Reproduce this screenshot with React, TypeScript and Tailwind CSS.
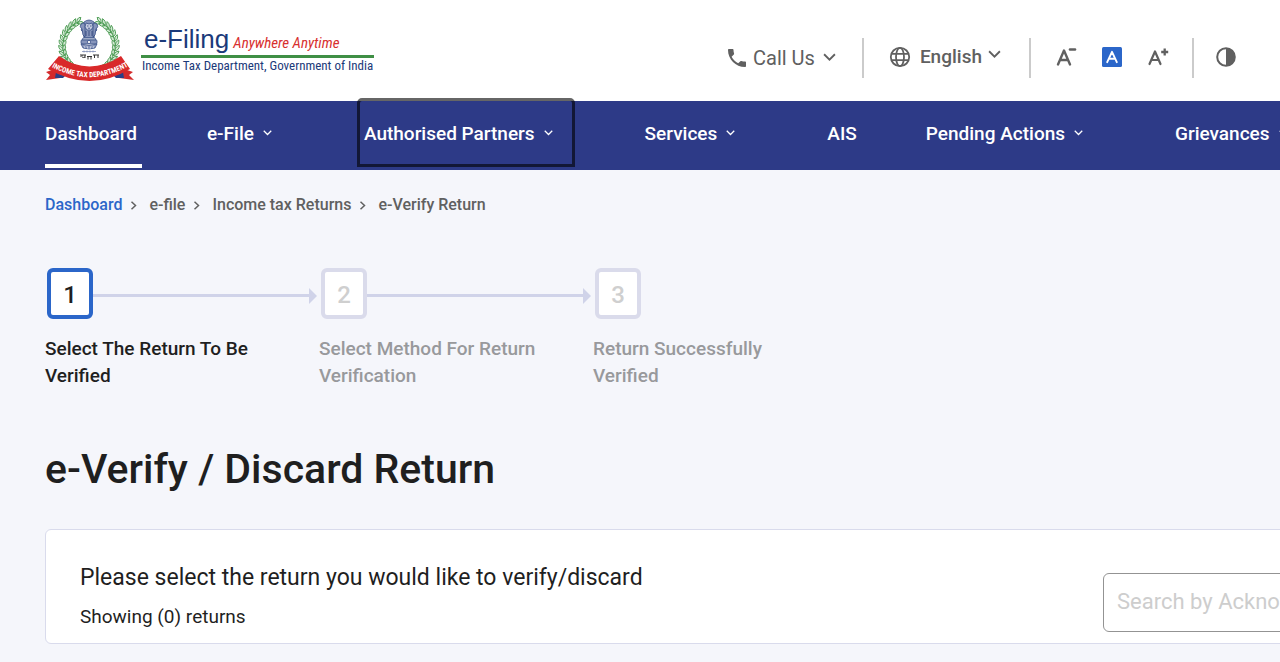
import React from 'react';

const CHEVRON = 'M1 1l5 5 5-5';

const Chevron: React.FC<{ className?: string }> = ({ className }) => (
  <svg className={className} viewBox="0 0 12 8" fill="none" stroke="currentColor" strokeWidth="1.700" aria-hidden="true">
    <path d={CHEVRON} />
  </svg>
);

// Leaves run from the ribbon up to the open top of the wreath
const leafAngles = Array.from({ length: 15 }, (_, i) => 8 + i * 10.5);

const Emblem: React.FC = () => (
  <svg className="h-16 w-[90px] shrink-0" viewBox="5 7 90 64" role="img" aria-label="Income Tax Department emblem">
    {/* Laurel wreath */}
    {[1, -1].map((side) => (
      <g key={side} transform={`translate(49 36) scale(${side} 1)`} fill="none" stroke="#3f9447" strokeWidth="0.8">
        <path d="M0 24C16 23 26 13 26 0C26 -12 19 -21 11 -24" strokeWidth="0.7" />
        {leafAngles.map((a) => (
          <g key={a} transform={`rotate(${90 - a})`}>
            <path d="M26 1Q30.500 0 30 -5Q26.500 -4 26 1Z" fill="#d3e8d4" />
            <path d="M26 1Q22 -1 23.500 -5Q27 -4 26 1Z" fill="#d3e8d4" />
          </g>
        ))}
      </g>
    ))}

    {/* Lion capital */}
    <g fill="#8795bb" stroke="#2c4580" strokeWidth="0.7">
      <path d="M44 12q5-4 10 0l1 5 2 3-2 2-1 6H44l-1-6-2-2 2-3z" />
      <path d="M41 14q-2 3 1 5l1 6 2 2V14q-2-2-4 0zM57 14q2 3-1 5l-1 6-2 2V14q2-2 4 0z" />
      <path d="M46 13q3 2 6 0l1 4-2 3h-4l-2-3z" fill="#c6cde0" />
      <path d="M47 16h1.500M50 16h1.500M48 18q1 1 2 0M46 21v5M49 21v5M52 21v5" fill="none" stroke="#1c3471" />
      <path d="M43 28h12l1 2H42z" fill="#dfe3ee" />
      <rect x="41" y="30" width="16" height="4" rx="1" />
      <circle cx="49" cy="32" r="1.600" fill="#fff" />
      <path d="M41 34q8 3 16 0l-2 4q-6 2-12 0z" />
      <path d="M44 36l1 2M47 36l1 3M51 36l-1 3M54 36l-1 2" stroke="#dfe3ee" />
    </g>
    <path d="M42 41.500h14M44 40.500v2M47 40.500v2M50 40.500v2M53 40.500v2" fill="none" stroke="#7585b0" strokeWidth="0.7" />
    <path d="M40 45h6M40.500 47l2-2M45 45v3M47 46.500h5M48 46.500v3M51 46.500v3M53 45h6M54.500 45v3M58 45v3M42 47q2 1 3 0" fill="none" stroke="#333" strokeWidth="1" />

    {/* Ribbon */}
    <path d="M15 59L6 62l4 3-4 5 14-2 5-3z" fill="#d42a2b" />
    <path d="M84 59l9 3-4 3 5 5-15-2-5-3z" fill="#d42a2b" />
    <path d="M15 68l1-6 9 4-2 2zM84 68l-1-6-9 4 2 2z" fill="#293f86" />
    <path d="M19 46Q49 67 81 46L90 59Q50 83 8 59Z" fill="#d9292a" />
    <path id="ribbon-line" d="M11 56.500Q49 78 89 56" fill="none" />
    <text fill="#fff" fontFamily="'Roboto Condensed', Roboto, sans-serif" fontWeight="700" fontSize="7.300" textAnchor="middle">
      <textPath href="#ribbon-line" startOffset="50%">INCOME TAX DEPARTMENT</textPath>
    </text>
  </svg>
);

const Logo: React.FC = () => (
  <a href="#" className="flex shrink-0 items-start gap-[6px]">
    <Emblem />
    <span className="mt-[6px] flex flex-col whitespace-nowrap font-['Roboto_Condensed','Liberation_Sans',sans-serif] text-[#1b3a7a]">
      <span className="flex h-8 items-baseline gap-1 px-[3px] leading-8">
        <span className="font-['Liberation_Sans',sans-serif] text-[26px]">e-Filing</span>
        <span className="text-[15px] italic text-[#d8302f]">Anywhere Anytime</span>
      </span>
      <span className="h-[3px] bg-[#3f8f45]" />
      <span className="px-px text-[13px] leading-4">Income Tax Department, Government of India</span>
    </span>
  </a>
);

const Divider: React.FC = () => <span className="h-10 w-[2px] bg-[#cbcbcb]" />;

const Header: React.FC = () => (
  <header className="flex h-[101px] items-start justify-between bg-white pl-[45px] pr-11 pt-[17px]">
    <Logo />
    <div className="mt-5 flex shrink-0 items-center text-xl leading-10 text-[#606060]">
      <button type="button" className="flex items-center">
        <svg className="mr-1 size-6" viewBox="0 0 24 24" fill="currentColor" aria-hidden="true">
          <path d="M20 15.500c-1.250 0-2.450-.2-3.570-.57-.35-.11-.74-.03-1.020.24l-2.200 2.200c-2.830-1.440-5.150-3.750-6.590-6.590l2.200-2.200c.28-.28.36-.67.25-1.020C8.700 6.450 8.500 5.250 8.500 4c0-.55-.45-1-1-1H4c-.55 0-1 .45-1 1 0 9.390 7.610 17 17 17 .55 0 1-.45 1-1v-3.500c0-.55-.45-1-1-1z" />
        </svg>
        Call Us
        <Chevron className="mb-[2px] ml-2 h-[9px] w-[13px]" />
      </button>
      <span className="ml-[26px] mr-6 flex"><Divider /></span>
      <button type="button" className="flex items-center pb-[2px] text-[19px] font-medium">
        <svg className="mr-2 size-6" viewBox="0 0 24 24" fill="none" stroke="currentColor" strokeWidth="1.800" aria-hidden="true">
          <circle cx="12" cy="12" r="9.200" />
          <ellipse cx="12" cy="12" rx="4" ry="9.200" />
          <path d="M3.600 8.800h16.800M3.600 15.200h16.800" />
        </svg>
        English
        <Chevron className="mb-[6px] ml-[6px] h-[9px] w-[13px]" />
      </button>
      <span className="ml-7 mr-6 flex"><Divider /></span>
      <button type="button" aria-label="Decrease text size" className="mr-[25px] pb-[2px]">
        <svg className="size-[22px]" viewBox="0 0 22 22" fill="none" stroke="currentColor" strokeLinecap="round" strokeLinejoin="round" strokeWidth="2.400" aria-hidden="true">
          <path d="M3 18.500L9 4.500l6 14M5.500 14h7" />
          <path d="M15 3.500h5" strokeWidth="2.600" />
        </svg>
      </button>
      <button type="button" aria-label="Default text size" className="mr-[25px] pb-[2px]">
        <svg className="size-[20px]" viewBox="0 0 20 20" aria-hidden="true">
          <rect width="20" height="20" rx="1.500" fill="#2b66c9" />
          <path d="M5.200 15.200L10 4.800l4.800 10.400M7 11.800h6" fill="none" stroke="#fff" strokeWidth="1.900" strokeLinecap="round" strokeLinejoin="round" />
        </svg>
      </button>
      <button type="button" aria-label="Increase text size" className="mr-[23px] pb-[2px]">
        <svg className="size-[22px]" viewBox="0 0 22 22" fill="none" stroke="currentColor" strokeLinecap="round" strokeLinejoin="round" strokeWidth="2.200" aria-hidden="true">
          <path d="M2.500 18L8 5.500 13.500 18M4.800 14h6.400" />
          <path d="M14.200 6h7M17.700 2.500v7" strokeWidth="2.300" strokeLinecap="butt" />
        </svg>
      </button>
      <Divider />
      <button type="button" aria-label="Toggle contrast" className="ml-[22px] pb-[3px]">
        <svg className="size-[20px]" viewBox="0 0 20 20" aria-hidden="true">
          <circle cx="10" cy="10" r="8.800" fill="none" stroke="currentColor" strokeWidth="2" />
          <path d="M10 1a9 9 0 0 1 0 18z" fill="currentColor" />
        </svg>
      </button>
    </div>
  </header>
);

interface NavItem {
  label: string;
  menu?: boolean;
  focused?: boolean;
}

const navItems: NavItem[] = [
  { label: 'e-File', menu: true },
  { label: 'Authorised Partners', menu: true, focused: true },
  { label: 'Services', menu: true },
  { label: 'AIS' },
  { label: 'Pending Actions', menu: true },
  { label: 'Grievances', menu: true },
];

const NavBar: React.FC = () => (
  <nav className="h-[69px] bg-[#2d3a87] pl-[45px] text-[19px] font-medium text-white">
    <ul className="flex w-max gap-[61px]">
      <li>
        <a href="#" className="flex h-[67px] items-center border-b-4 border-white pr-[5px] pt-[3px] whitespace-nowrap">Dashboard</a>
      </li>
      {navItems.map((item) => (
        <li key={item.label} className={item.menu ? 'pr-2' : 'pr-1'}>
          {item.menu ? (
            <button
              type="button"
              className={`flex h-[63px] items-center gap-[9px] pl-1 pr-[19px] pt-[3px] whitespace-nowrap ${item.focused ? 'rounded-t-xs outline-3 outline-black/60' : ''}`}
            >
              {item.label}
              <Chevron className="mb-[2px] h-[6px] w-[9px]" />
            </button>
          ) : (
            <a href="#" className="flex h-[63px] items-center pl-1 pt-[3px]">{item.label}</a>
          )}
        </li>
      ))}
    </ul>
  </nav>
);

const crumbs = ['Dashboard', 'e-file', 'Income tax Returns', 'e-Verify Return'];

const Breadcrumbs: React.FC = () => (
  <ol className="flex text-base font-medium text-[#606060]">
    {crumbs.map((crumb, index) => (
      <li key={crumb} className="flex items-center">
        {index === 0 ? <a href="#" className="text-[#2b66c9]">{crumb}</a> : crumb}
        {index < crumbs.length - 1 && (
          <svg className="ml-2 mr-3 h-[9px] w-[7px]" viewBox="0 0 7 9" fill="none" stroke="currentColor" strokeWidth="1.500" aria-hidden="true">
            <path d="M1.500 .8l4 3.700-4 3.700" />
          </svg>
        )}
      </li>
    ))}
  </ol>
);

const steps = ['Select The Return To Be Verified', 'Select Method For Return Verification', 'Return Successfully Verified'];

const Stepper: React.FC = () => (
  <ol className="flex">
    {steps.map((step, index) => {
      const active = index === 0;
      return (
        <li key={step} className="w-[274px]">
          <div className="flex items-center pl-[2px]">
            <span
              className={`flex h-[51px] w-[46px] shrink-0 items-center justify-center rounded-md border-4 bg-white pt-[3px] text-2xl font-medium ${active ? 'border-[#2b66c9] text-[#1f1f1f]' : 'border-[#dadbeb] text-[#cfcfcf]'}`}
            >
              {index + 1}
            </span>
            {index < steps.length - 1 && (
              <span className="mr-[2px] flex flex-1 items-center pt-1">
                <span className="h-[3px] flex-1 bg-[#d0d3e9]" />
                <svg className="h-4 w-2" viewBox="0 0 8 16" fill="#d0d3e9" aria-hidden="true">
                  <path d="M0 0l8 8-8 8z" />
                </svg>
              </span>
            )}
          </div>
          <p className={`mt-4 w-[224px] text-[19px] leading-[27px] font-medium ${active ? 'text-[#1f1f1f]' : 'text-[#98999c]'}`}>{step}</p>
        </li>
      );
    })}
  </ol>
);

const ReturnsCard: React.FC = () => (
  <section className="flex min-w-[1395px] items-start justify-between rounded-md border border-[#d9dbec] bg-white pl-[34px] pr-9">
    <div className="pt-8 pb-3">
      <h2 className="text-[23px] leading-8">Please select the return you would like to verify/discard</h2>
      <p className="mt-[9px] text-[19px] leading-7">Showing (0) returns</p>
    </div>
    <input
      type="search"
      aria-label="Search by Acknowledgement Number"
      placeholder="Search by Acknowledgement Number"
      className="mt-[43px] h-[59px] w-[300px] rounded-md border border-[#939393] px-[13px] pb-[3px] text-[22px] placeholder:text-[#cdcdcd]"
    />
  </section>
);

const App: React.FC = () => (
  <div className="min-h-screen overflow-hidden bg-[#f5f6fb] font-[Roboto,sans-serif] text-[#1f1f1f]">
    <Header />
    <NavBar />
    <main className="px-[45px] pt-[23px] pb-[18px]">
      <Breadcrumbs />
      <div className="mt-[51px]">
        <Stepper />
      </div>
      <h1 className="mt-14 mb-9 text-[41px] leading-[48px] font-medium">e-Verify / Discard Return</h1>
      <ReturnsCard />
    </main>
  </div>
);

export default App;
